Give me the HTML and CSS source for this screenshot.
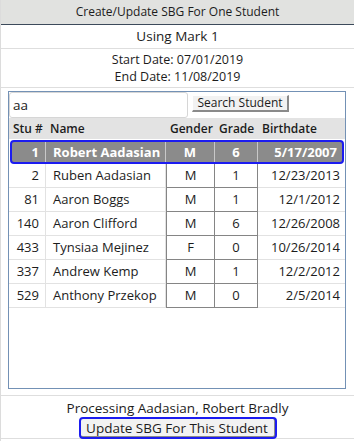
FILE: index.html
```html
<!DOCTYPE html>
<html>
<head>
<meta charset="utf-8">
<link rel="stylesheet" href="styles.css">
</head>
<body>
<div class="page">
  <div class="titlebar">Create/Update SBG For One Student</div>
  <div class="section mark">Using Mark 1</div>
  <div class="section dates">
    <div>Start Date: 07/01/2019</div>
    <div>End Date: 11/08/2019</div>
  </div>
  <div class="panel-wrap">
    <div class="panel">
      <div class="searchbar">
        <div class="search-input">aa</div>
        <button class="btn search-btn">Search Student</button>
      </div>
      <div class="grid">
        <div class="row head">
          <div class="c">Stu #</div>
          <div class="c">Name</div>
          <div class="c">Gender</div>
          <div class="c">Grade</div>
          <div class="c">Birthdate</div>
        </div>
        <div class="row selected">
          <div class="c num">1</div>
          <div class="c name">Robert Aadasian</div>
          <div class="c mid">M</div>
          <div class="c mid">6</div>
          <div class="c date">5/17/2007</div>
        </div>
        <div class="row">
          <div class="c num">2</div>
          <div class="c name">Ruben Aadasian</div>
          <div class="c mid g">M</div>
          <div class="c mid g">1</div>
          <div class="c date">12/23/2013</div>
        </div>
        <div class="row">
          <div class="c num">81</div>
          <div class="c name">Aaron Boggs</div>
          <div class="c mid g">M</div>
          <div class="c mid g">1</div>
          <div class="c date">12/1/2012</div>
        </div>
        <div class="row">
          <div class="c num">140</div>
          <div class="c name">Aaron Clifford</div>
          <div class="c mid g">M</div>
          <div class="c mid g">6</div>
          <div class="c date">12/26/2008</div>
        </div>
        <div class="row">
          <div class="c num">433</div>
          <div class="c name">Tynsiaa Mejinez</div>
          <div class="c mid g">F</div>
          <div class="c mid g">0</div>
          <div class="c date">10/26/2014</div>
        </div>
        <div class="row">
          <div class="c num">337</div>
          <div class="c name">Andrew Kemp</div>
          <div class="c mid g">M</div>
          <div class="c mid g">1</div>
          <div class="c date">12/2/2012</div>
        </div>
        <div class="row">
          <div class="c num">529</div>
          <div class="c name">Anthony Przekop</div>
          <div class="c mid g">M</div>
          <div class="c mid g">0</div>
          <div class="c date">2/5/2014</div>
        </div>
      </div>
    </div>
  </div>
  <div class="footer">
    <div class="processing">Processing Aadasian, Robert Bradly</div>
    <button class="btn update-btn">Update SBG For This Student</button>
  </div>
</div>
</body>
</html>
```
FILE: styles.css
```css
* { box-sizing: border-box; }
html, body { margin: 0; padding: 0; background: #fff; }
body {
  font-family: "Open Sans", "DejaVu Sans", sans-serif;
  color: #1c1c1c;
  font-size: 13px;
}
.page {
  width: 354px;
  height: 441px;
  border-left: 1px solid #dcdcdc;
  display: flex;
  flex-direction: column;
}
.titlebar {
  height: 25px;
  background: #e1e2e0;
  border-bottom: 1px solid #3c4a5b;
  text-align: center;
  font-size: 12px;
  line-height: 24px;
  font-weight: 500;
}
.section {
  border-bottom: 1px solid #dedede;
  text-align: center;
  font-size: 13.5px;
  font-weight: 500;
}
.mark {
  height: 24px;
  line-height: 23px;
}
.dates {
  height: 39px;
  padding-top: 2px;
  line-height: 17px;
  font-size: 12.5px;
}
.panel-wrap {
  padding: 3px 8px 6px 7px;
  border-bottom: 1px solid #dedede;
}
.panel {
  height: 298px;
  border: 1px solid #7391b5;
  display: flex;
  flex-direction: column;
}
.searchbar {
  display: flex;
  align-items: center;
  gap: 4px;
  height: 26px;
}
.search-input {
  width: 179px;
  height: 26px;
  border: 1px solid #d6d6d6;
  border-radius: 3px;
  padding: 0 3px;
  line-height: 24px;
  font-size: 13.5px;
}
.btn {
  font-family: inherit;
  color: #1c1c1c;
  background: #f2f2f2;
  border: 1px solid #fff;
  border-right: 2px solid #8a8a8a;
  border-bottom: 2px solid #8a8a8a;
  padding: 0 2px;
  cursor: default;
  white-space: nowrap;
}
.search-btn {
  height: 17px;
  font-size: 12px;
  line-height: 13px;
  width: 97px;
  margin-top: -4px;
}
.grid { display: flex; flex-direction: column; }
.row {
  display: grid;
  grid-template-columns: 37px 120px 49px 43px 87px;
  height: 24px;
}
.row .c {
  line-height: 23px;
  white-space: nowrap;
  border-right: 1px solid #e2e2e2;
  border-bottom: 1px solid #e2e2e2;
}
.row .c:last-child { border-right: none; }
.head {
  height: 21px;
  background: #e3e3e3;
  font-weight: 600;
  font-size: 12px;
}
.head .c {
  border: none;
  line-height: 21px;
  padding-left: 4px;
}
.num { text-align: right; padding-right: 6px; }
.name { padding-left: 7px; }
.mid { text-align: center; }
.date { text-align: right; padding-right: 5px; }
.row .g {
  border-right: 1px solid #858585;
  border-bottom: 1px solid #858585;
}
.row .g:nth-child(3) { border-left: 1px solid #858585; }
.row .g + .g { border-left: none; }
.selected {
  margin: 1px 1px 0 1px;
  background: #8b8b8b;
  border: 2px solid #1c1cf0;
  border-radius: 4px;
  color: #fff;
  font-weight: 700;
  grid-template-columns: 34px 120px 49px 43px 84px;
}
.selected .c {
  border-bottom: none;
  border-right: 1px solid #c8c8c8;
  line-height: 20px;
}
.footer {
  height: 43px;
  display: flex;
  flex-direction: column;
  align-items: center;
  border-bottom: 1px solid #dedede;
}
.processing {
  font-size: 13.5px;
  line-height: 16px;
  margin-top: 4px;
}
.update-btn {
  height: 22px;
  width: 196px;
  font-size: 13.5px;
  line-height: 16px;
  border-radius: 3px;
  outline: 2px solid #1c1cf0;
  outline-offset: -1px;
  margin-top: 2px;
}
```
